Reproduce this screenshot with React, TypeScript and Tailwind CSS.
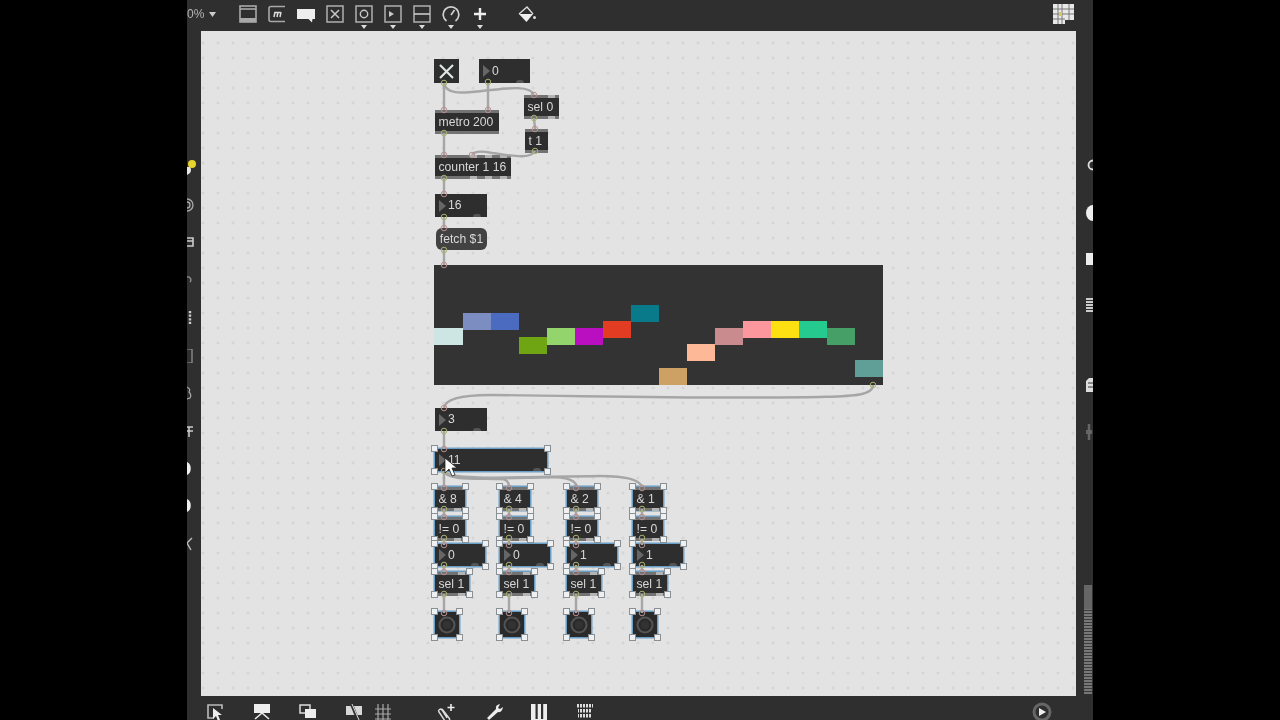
import type { ReactNode } from "react";

const font = "font-['Liberation_Sans',Arial,sans-serif]";

const bars = [
  { color: "bg-[#cde6e4]", top: "mt-[63px]", width: "w-[29px]" },
  { color: "bg-[#7b8dc1]", top: "mt-[48px]", width: "w-[28px]" },
  { color: "bg-[#4a6bbf]", top: "mt-[48px]", width: "w-[28px]" },
  { color: "bg-[#6fa512]", top: "mt-[72px]", width: "w-[28px]" },
  { color: "bg-[#93d46d]", top: "mt-[63px]", width: "w-[28px]" },
  { color: "bg-[#b90fc0]", top: "mt-[63px]", width: "w-[28px]" },
  { color: "bg-[#e23d23]", top: "mt-[56px]", width: "w-[28px]" },
  { color: "bg-[#087a8a]", top: "mt-[40px]", width: "w-[28px]" },
  { color: "bg-[#cda064]", top: "mt-[103px]", width: "w-[28px]" },
  { color: "bg-[#fcb897]", top: "mt-[79px]", width: "w-[28px]" },
  { color: "bg-[#c98b8d]", top: "mt-[63px]", width: "w-[28px]" },
  { color: "bg-[#fd979e]", top: "mt-[56px]", width: "w-[28px]" },
  { color: "bg-[#fde011]", top: "mt-[56px]", width: "w-[28px]" },
  { color: "bg-[#25cb8e]", top: "mt-[56px]", width: "w-[28px]" },
  { color: "bg-[#459f66]", top: "mt-[63px]", width: "w-[28px]" },
  { color: "bg-[#5f9f98]", top: "mt-[95px]", width: "w-[28px]" },
];

const columns = [
  { left: "left-[234px]", and: "& 8", num: "0" },
  { left: "left-[299px]", and: "& 4", num: "0" },
  { left: "left-[366px]", and: "& 2", num: "1" },
  { left: "left-[432px]", and: "& 1", num: "1" },
];

function Handles() {
  const corners = [
    "-left-[4px] -top-[4px]",
    "-right-[4px] -top-[4px]",
    "-left-[4px] -bottom-[4px]",
    "-right-[4px] -bottom-[4px]",
  ];
  return (
    <>
      {corners.map((c) => (
        <span key={c} className={`absolute ${c} z-10 h-[7px] w-[7px] border border-[#8a8f94] bg-[#eef0f1]`} />
      ))}
    </>
  );
}

function Strip({ marks = 0 }: { marks?: number }) {
  return (
    <div className="flex h-[3px] shrink-0 justify-end gap-[8px] bg-[#737373] pr-[4px]">
      {Array.from({ length: marks }).map((_, i) => (
        <span key={i} className="h-[3px] w-[7px] bg-[#b4b4b4]" />
      ))}
    </div>
  );
}

// max object box: grey port strips on top and bottom, label in the middle
function Obj({
  label,
  box,
  selected,
  top,
  bottom,
}: {
  label: string;
  box: string;
  selected?: boolean;
  top?: number;
  bottom?: number;
}) {
  return (
    <div className={`${box} flex flex-col bg-[#2e2e2e] ${selected ? "relative ring-[1.5px] ring-[#6a9fc8]" : "absolute"}`}>
      <Strip marks={top} />
      <div className="flex flex-1 items-center pl-[3.5px] text-[12.2px] text-[#d8d8d8]">{label}</div>
      <Strip marks={bottom} />
      {selected && <Handles />}
    </div>
  );
}

function NumBox({ value, box, selected }: { value: string; box: string; selected?: boolean }) {
  return (
    <div className={`${box} flex items-center bg-[#2e2e2e] ${selected ? "relative ring-[1.5px] ring-[#6a9fc8]" : "absolute"}`}>
      <svg width="12" height="14" viewBox="0 0 12 14" className="ml-[3px] shrink-0">
        <path d="M1 1 L8 7 L1 13 Z" fill="#666" />
      </svg>
      <span className="-ml-[2px] text-[12.2px] text-[#d8d8d8]">{value}</span>
      <span className="absolute bottom-0 right-[6px] h-[3px] w-[8px] rounded-t-full bg-[#555]" />
      {selected && <Handles />}
    </div>
  );
}

function Bang() {
  return (
    <div className="relative flex h-[25px] w-[24px] items-center justify-center bg-[#2a2a2a] ring-[1.5px] ring-[#6a9fc8]">
      <svg width="20" height="20" viewBox="0 0 20 20">
        <circle cx="10" cy="10" r="7.5" fill="none" stroke="#545454" strokeWidth="2" />
        <circle cx="10" cy="10" r="4" fill="#333" />
      </svg>
      <Handles />
    </div>
  );
}

function Cords() {
  const xs = [444, 509, 576, 642];
  const cords = [
    "M444 83 C446 95 462 93 482 91 S530 84 534 95",
    "M444 83 L444 110",
    "M488 83 L488 110",
    "M534 118 L535 129",
    "M535 151 C530 160 510 155 492 153 C482 151 474 151 472 155",
    "M444 133 L444 155",
    "M444 178 L444 194",
    "M444 217 L444 228",
    "M444 250 L444 265",
    "M873 385 C873 396 850 396 820 397 C700 399 600 396 490 395 C460 395 445 399 444 408",
    "M444 431 L444 449",
    "M444 471 L444 487",
    "M444 471 C446 481 480 478 500 479 C506 479 509 481 509 487",
    "M444 471 C446 480 500 479 550 477 C568 477 576 481 577 487",
    "M444 471 C446 481 520 477 600 476 C628 476 640 480 642 487",
    ...xs.flatMap((x) => [`M${x} 509 L${x} 517`, `M${x} 539 L${x} 545`, `M${x} 565 L${x} 572`, `M${x} 594 L${x} 613`]),
  ];
  const inlets = [
    [444, 110], [488, 110], [534, 95], [535, 129], [444, 155], [472, 155], [444, 194], [444, 228], [444, 265], [444, 408], [444, 449],
    ...xs.flatMap((x) => [[x, 488], [x, 517], [x, 545], [x, 572], [x, 613]]),
  ];
  const outlets = [
    [444, 83], [488, 82], [534, 118], [535, 151], [444, 133], [444, 178], [444, 217], [444, 250], [873, 385], [444, 431], [444, 471],
    ...xs.flatMap((x) => [[x, 509], [x, 538], [x, 565], [x, 594]]),
  ];
  return (
    <svg className="pointer-events-none absolute left-0 top-0 z-20 h-[665px] w-[875px]" viewBox="201 31 875 665">
      {cords.map((d) => (
        <path key={d} d={d} fill="none" stroke="#a6a6a6" strokeWidth="2.4" />
      ))}
      {inlets.map(([x, y], i) => (
        <circle key={i} cx={x} cy={y} r="2.8" fill="none" stroke="#b98f8f" strokeWidth="1" />
      ))}
      {outlets.map(([x, y], i) => (
        <circle key={i} cx={x} cy={y} r="2.8" fill="none" stroke="#aab070" strokeWidth="1" />
      ))}
      <path d="M445 458 L445 473 L449 469 L452 476 L455 475 L452 468 L457 468 Z" fill="#fff" stroke="#222" strokeWidth="0.8" />
    </svg>
  );
}

function Canvas() {
  return (
    <div className="relative flex-1 overflow-hidden bg-[#e3e3e3] bg-[radial-gradient(circle,#d0d0d0_1px,transparent_1.3px)] bg-[size:15px_15px] bg-[position:-5.5px_4.5px]">
      <div className="absolute left-[233px] top-[28px] flex h-[24px] w-[25px] items-center justify-center bg-[#2e2e2e]">
        <svg width="17" height="17" viewBox="0 0 17 17">
          <path d="M2 2 L15 15 M15 2 L2 15" stroke="#dfe5e5" strokeWidth="2.2" />
        </svg>
      </div>
      <NumBox value="0" box="left-[278px] top-[28px] h-[24px] w-[51px]" />
      <Obj label="sel 0" box="left-[323px] top-[64px] h-[23px] w-[35px]" top={1} bottom={1} />
      <Obj label="metro 200" box="left-[234px] top-[79px] h-[23px] w-[64px]" />
      <Obj label="t 1" box="left-[324px] top-[98px] h-[23px] w-[23px]" />
      <Obj label="counter 1 16" box="left-[234px] top-[124px] h-[23px] w-[76px]" top={3} bottom={3} />
      <NumBox value="16" box="left-[234px] top-[163px] h-[23px] w-[52px]" />
      <div className="absolute left-[235px] top-[197px] flex h-[22px] w-[51px] items-center justify-center rounded-md bg-[#424242] text-[12.2px] text-[#d8d8d8]">
        fetch $1
      </div>

      <div className="absolute left-[233px] top-[234px] flex h-[120px] w-[449px] items-start bg-[#333]">
        {bars.map((b, i) => (
          <div key={i} className={`h-[17px] shrink-0 ${b.width} ${b.color} ${b.top}`} />
        ))}
      </div>

      <NumBox value="3" box="left-[234px] top-[377px] h-[23px] w-[52px]" />
      <div className="absolute left-[234px] top-[418px]">
        <NumBox value="11" box="h-[22px] w-[112px]" selected />
      </div>

      {columns.map((c) => (
        <div key={c.left} className={`absolute top-[456px] flex flex-col items-start ${c.left}`}>
          <Obj label={c.and} box="h-[23px] w-[30px]" selected bottom={1} />
          <Obj label="!= 0" box="mt-[7px] h-[22px] w-[30px]" selected bottom={1} />
          <div className="mt-[5px]">
            <NumBox value={c.num} box="h-[22px] w-[50px]" selected />
          </div>
          <Obj label="sel 1" box="mt-[6px] h-[22px] w-[34px]" selected top={1} bottom={1} />
          <div className="mt-[18px]">
            <Bang />
          </div>
        </div>
      ))}
      <Cords />
    </div>
  );
}

function ToolSlot({ children, menu }: { children: ReactNode; menu?: boolean }) {
  return (
    <div className="relative flex h-[31px] w-[29px] shrink-0 justify-center pt-[5px]">
      {children}
      {menu && (
        <svg width="6" height="4" viewBox="0 0 6 4" className="absolute left-[11.5px] top-[25px]">
          <path d="M0 0 L6 0 L3 4 Z" fill="#ddd" />
        </svg>
      )}
    </div>
  );
}

function TopBar() {
  const s = { fill: "none", stroke: "#a8a8a8", strokeWidth: 1.6 };
  return (
    <div className={`flex h-[31px] shrink-0 items-start overflow-hidden bg-[#2f2f2f] ${font}`}>
      <div className="flex w-[46.5px] shrink-0 items-center pt-[7px] text-[12px] leading-[14px] text-[#b5b5b5]">
        <span>0%</span>
        <svg width="7" height="5" viewBox="0 0 7 5" className="ml-[5px]">
          <path d="M0 0 L7 0 L3.5 5 Z" fill="#ccc" />
        </svg>
      </div>
      <ToolSlot>
        <svg width="18" height="18" viewBox="0 0 18 18">
          <rect x="1" y="1" width="16" height="16" {...s} />
          <path d="M1 4 H17" {...s} />
          <rect x="1" y="13" width="16" height="4" fill="#a8a8a8" />
        </svg>
      </ToolSlot>
      <ToolSlot>
        <svg width="18" height="18" viewBox="0 0 18 18">
          <path d="M17 1.500 H3 Q1 1.500 1 3.500 V14.500 Q1 16.500 3 16.500 H17" {...s} />
          <path d="M6 12 L7 7 M9 12 L10 7 M12 12 L13 7 M6.500 7.500 H13" stroke="#ddd" strokeWidth="1.500" fill="none" />
        </svg>
      </ToolSlot>
      <ToolSlot>
        <svg width="18" height="18" viewBox="0 0 18 18">
          <path d="M0 4 H18 V14 H15.500 L15 17.500 L11.500 14 H0 Z" fill="#eee" />
        </svg>
      </ToolSlot>
      <ToolSlot>
        <svg width="18" height="18" viewBox="0 0 18 18">
          <rect x="1" y="1" width="16" height="16" {...s} />
          <path d="M5 5 L13 13 M13 5 L5 13" stroke="#c8c8c8" strokeWidth="1.5" />
        </svg>
      </ToolSlot>
      <ToolSlot menu>
        <svg width="18" height="18" viewBox="0 0 18 18">
          <rect x="1" y="1" width="16" height="16" {...s} />
          <circle cx="9" cy="9" r="3.700" stroke="#c8c8c8" strokeWidth="1.4" fill="none" />
        </svg>
      </ToolSlot>
      <ToolSlot menu>
        <svg width="18" height="18" viewBox="0 0 18 18">
          <rect x="1" y="1" width="16" height="16" {...s} />
          <path d="M5 6 L10 9 L5 12 Z" fill="#c8c8c8" />
        </svg>
      </ToolSlot>
      <ToolSlot menu>
        <svg width="18" height="18" viewBox="0 0 18 18">
          <rect x="1" y="1" width="16" height="16" {...s} />
          <path d="M1 9 H17" stroke="#c8c8c8" strokeWidth="1.6" />
        </svg>
      </ToolSlot>
      <ToolSlot menu>
        <svg width="18" height="18" viewBox="0 0 18 18">
          <path d="M4.500 16 A7.800 7.800 0 1 1 13.500 16" fill="none" stroke="#d0d0d0" strokeWidth="1.7" />
          <path d="M9 10 L12.500 5" stroke="#d0d0d0" strokeWidth="1.7" />
        </svg>
      </ToolSlot>
      <ToolSlot menu>
        <svg width="18" height="18" viewBox="0 0 18 18">
          <path d="M9 3 V15 M3 9 H15" stroke="#eee" strokeWidth="2.4" />
        </svg>
      </ToolSlot>
      <div className="ml-[18px]">
        <ToolSlot>
          <svg width="18" height="18" viewBox="0 0 18 18">
            <path d="M1 9 L9 2 L15 9" fill="none" stroke="#ddd" strokeWidth="1.300" />
            <path d="M1 9 H15 L8.500 17 Z" fill="#eee" />
            <circle cx="16.500" cy="12.500" r="1.500" fill="#ddd" />
          </svg>
        </ToolSlot>
      </div>
      <div className="ml-auto mr-[19px] mt-[4px]">
        <svg width="21" height="20" viewBox="0 0 21 20">
          <rect x="0" y="0" width="21" height="16" fill="#e8e8e8" />
          <rect x="0" y="16" width="12" height="4" fill="#e8e8e8" />
          <path d="M0 5 H21 M0 10 H21 M0 15 H12 M5 0 V20 M9 0 V20 M16 0 V16" stroke="#777" strokeWidth="1" />
          <rect x="6" y="8" width="3" height="4" fill="#d8c860" />
        </svg>
      </div>
    </div>
  );
}

function LeftRail() {
  const items = [
    <path key="a" d="M0 6 H3 Q5 9 3 12 L0 14 Z" fill="#e8e8e8" />,
    <path key="b" d="M0 1 A6 6 0 0 1 0 13 M0 4 A3 3 0 0 1 0 10" fill="none" stroke="#aaa" strokeWidth="1.3" />,
    <path key="c" d="M0 2 H6 V10 H0 M0 5 H6" fill="none" stroke="#ccc" strokeWidth="1.6" />,
    <path key="d" d="M0 3 A3 3 0 0 1 3 8" fill="none" stroke="#999" strokeWidth="1.2" />,
    <path key="e" d="M3 0 V14" fill="none" stroke="#ccc" strokeWidth="2.4" strokeDasharray="2.2 1.4" />,
    <path key="f" d="M0 0 H5 V14 H0" fill="none" stroke="#999" strokeWidth="1.2" />,
    <path key="g" d="M0 1 Q4 3 2 6 Q5 9 3 12 L0 13" fill="none" stroke="#aaa" strokeWidth="1.2" />,
    <path key="h" d="M0 3 H6 M0 7 H6 M2 3 V13" fill="none" stroke="#ccc" strokeWidth="1.5" />,
    <path key="i" d="M0 0 A6 7 0 0 1 0 13 Z" fill="#eee" />,
    <path key="j" d="M0 0 A6 7 0 0 1 0 13 Z" fill="#eee" />,
    <path key="k" d="M5 1 L0 6 L4 13" fill="none" stroke="#bbb" strokeWidth="1.4" />,
  ];
  return (
    <div className="relative flex w-[14px] shrink-0 flex-col overflow-hidden bg-[#2f2f2f] pt-[118px]">
      <span className="absolute left-[1px] top-[129px] h-[8px] w-[8px] rounded-full bg-[#e8d22c]" />
      {items.map((p, i) => (
        <div key={i} className="flex h-[37.6px] shrink-0 items-center">
          <svg width="14" height="14" viewBox="0 0 14 14">{p}</svg>
        </div>
      ))}
    </div>
  );
}

function RightRail() {
  return (
    <div className="flex w-[17px] shrink-0 flex-col overflow-hidden bg-[#2f2f2f] pl-[10px]">
      <svg width="7" height="12" viewBox="0 0 7 12" className="mt-[128px]">
        <path d="M7 1.500 A4.500 4.500 0 0 0 7 10.500" fill="none" stroke="#e0e0e0" strokeWidth="1.800" />
      </svg>
      <svg width="7" height="16" viewBox="0 0 7 16" className="mt-[34px]">
        <path d="M7 0 A7 8 0 0 0 7 16 Z" fill="#eee" />
      </svg>
      <div className="mt-[32px] h-[12px] w-[7px] bg-[#eee]" />
      <div className="mt-[33px] h-[14px] w-[7px] bg-[repeating-linear-gradient(0deg,#ccc_0,#ccc_2px,#2f2f2f_2px,#2f2f2f_3px)]" />
      <svg width="7" height="14" viewBox="0 0 7 14" className="mt-[66px]">
        <path d="M7 0 L3 0 L0 3 V14 H7 Z" fill="#ddd" />
        <path d="M2 5 H7 M2 9 H7" stroke="#333" strokeWidth="1" />
      </svg>
      <svg width="7" height="16" viewBox="0 0 7 16" className="mt-[32px]">
        <path d="M3 0 V16" stroke="#666" strokeWidth="2.500" />
        <rect x="0" y="6" width="6" height="4" fill="#666" />
      </svg>
      <div className="-ml-[2px] mt-[145px] h-[24px] w-[8px] bg-[#666]" />
      <div className="-ml-[2px] h-[85px] w-[8px] bg-[repeating-linear-gradient(0deg,#777_0,#777_2px,#3a3a3a_2px,#3a3a3a_3px)]" />
    </div>
  );
}

function BottomBar() {
  return (
    <div className="flex h-[24px] shrink-0 items-start overflow-hidden bg-[#2f2f2f] pl-[16px] pt-[8px]">
      <svg width="24" height="18" viewBox="0 0 24 18">
        <path d="M11 14 H5 V1 H19 V5" fill="none" stroke="#bbb" strokeWidth="1.6" />
        <path d="M10 4 L10 15 L13 12 L15 17 L17 16 L15 11 L19 11 Z" fill="#eee" />
      </svg>
      <svg width="24" height="18" viewBox="0 0 24 18" className="ml-[23px]">
        <rect x="4" y="0" width="16" height="9" fill="#eee" />
        <path d="M12 9 L5 15 M12 9 L19 15" stroke="#eee" strokeWidth="1.6" />
      </svg>
      <svg width="24" height="18" viewBox="0 0 24 18" className="ml-[22px]">
        <rect x="4" y="1" width="10" height="8" fill="none" stroke="#ddd" strokeWidth="1.5" />
        <rect x="9" y="5" width="11" height="9" fill="#eee" />
      </svg>
      <svg width="24" height="18" viewBox="0 0 24 18" className="ml-[22px]">
        <rect x="4" y="2" width="16" height="9" fill="#d8d8d8" />
        <path d="M9 -1 L16 16" stroke="#2f2f2f" strokeWidth="3" />
        <path d="M10 0 L17 16" stroke="#ddd" strokeWidth="1" />
      </svg>
      <svg width="18" height="18" viewBox="0 0 18 18" className="ml-[8px]">
        <path d="M1 5 H17 M1 10 H17 M1 15 H17 M4 0 V18 M9 0 V18 M14 0 V18" stroke="#aaa" strokeWidth="1.200" />
      </svg>
      <svg width="24" height="18" viewBox="0 0 24 18" className="ml-[42px]">
        <path d="M8 5 L15 14 A2.500 2.500 0 0 1 11 17 L5 8 A1.500 1.500 0 0 1 8 6 L13 14" fill="none" stroke="#ddd" strokeWidth="1.400" />
        <path d="M17 0 V7 M13.500 3.500 H20.500" stroke="#eee" strokeWidth="1.600" />
      </svg>
      <svg width="24" height="18" viewBox="0 0 24 18" className="ml-[23px]">
        <path d="M19 0 Q14 1 15 5 L6 14 L8 16 L17 8 Q21 9 22 3 L19 5 L17 4 Z" fill="#eee" />
      </svg>
      <svg width="24" height="18" viewBox="0 0 24 18" className="ml-[22px]">
        <rect x="4" y="0" width="16" height="18" fill="#eee" />
        <rect x="8.500" y="0" width="2.200" height="15" fill="#2f2f2f" />
        <rect x="14" y="0" width="2.200" height="15" fill="#2f2f2f" />
      </svg>
      <svg width="24" height="18" viewBox="0 0 24 18" className="ml-[22px]">
        <g fill="#ddd">
          <rect x="4" y="0" width="16" height="3.500" />
          <rect x="5" y="5" width="14" height="3.500" />
          <rect x="5" y="10" width="14" height="3.500" />
        </g>
        <path d="M6.500 0 V14 M9.500 0 V14 M12.500 0 V14 M15.500 0 V14 M18.500 0 V14" stroke="#2f2f2f" strokeWidth="1" />
      </svg>
      <svg width="24" height="20" viewBox="0 0 24 20" className="ml-[433px] -mt-[2px]">
        <circle cx="12" cy="10" r="8" fill="none" stroke="#666" strokeWidth="3" />
        <path d="M9 6 L16 10 L9 14 Z" fill="#eee" />
      </svg>
    </div>
  );
}

export default function App() {
  return (
    <div className={`flex h-[720px] w-[1280px] overflow-hidden bg-black blur-[0.35px] ${font}`}>
      <div className="w-[187px] shrink-0" />
      <div className="flex w-[906px] shrink-0 flex-col">
        <TopBar />
        <div className="flex h-[665px] shrink-0">
          <LeftRail />
          <Canvas />
          <RightRail />
        </div>
        <BottomBar />
      </div>
    </div>
  );
}
